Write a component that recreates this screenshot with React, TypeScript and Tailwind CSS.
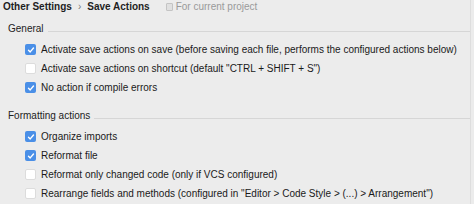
import React from "react";

type Item = { label: string; checked: boolean };

const general: Item[] = [
  { label: "Activate save actions on save (before saving each file, performs the configured actions below)", checked: true },
  { label: 'Activate save actions on shortcut (default "CTRL + SHIFT + S")', checked: false },
  { label: "No action if compile errors", checked: true },
];

const formatting: Item[] = [
  { label: "Organize imports", checked: true },
  { label: "Reformat file", checked: true },
  { label: "Reformat only changed code (only if VCS configured)", checked: false },
  { label: 'Rearrange fields and methods (configured in "Editor > Code Style > (...) > Arrangement")', checked: false },
];

function Checkbox({ checked }: { checked: boolean }) {
  if (checked) {
    return (
      <span className="flex h-[11px] w-[11px] shrink-0 items-center justify-center rounded-[2px] bg-[#4a8fe7]">
        <svg width="8" height="8" viewBox="0 0 8 8">
          <path d="M1.5 4.2 L3.2 5.9 L6.5 2" fill="none" stroke="white" strokeWidth="1.4" strokeLinecap="round" strokeLinejoin="round" />
        </svg>
      </span>
    );
  }
  return <span className="h-[11px] w-[11px] shrink-0 rounded-[2px] border border-[#dcdcdc] bg-white" />;
}

function Section({ title, items }: { title: string; items: Item[] }) {
  return (
    <div>
      <div className="flex h-[14px] items-center gap-1 pl-2">
        <span className="text-[#222]">{title}</span>
        <span className="mt-[4px] h-px flex-1 bg-[#d6d6d6]" />
      </div>
      <div className="mt-[6px] flex flex-col gap-[4px] pl-[25px]">
        {items.map((item) => (
          <div key={item.label} className="flex h-[15px] items-center gap-[5px]">
            <Checkbox checked={item.checked} />
            <span className="whitespace-nowrap text-[#1a1a1a]">{item.label}</span>
          </div>
        ))}
      </div>
    </div>
  );
}

export default function App() {
  return (
    <div
      className="h-[204px] w-[474px] overflow-hidden bg-[#ececec] text-[10px] leading-[14px]"
      style={{ fontFamily: '"Liberation Sans", Arial, sans-serif' }}
    >
      <div className="mr-[3px] h-full border-r border-[#dedede]">
        <div className="flex h-[14px] items-center pl-[3px]">
          <span className="font-bold text-[#1e1e1e]">Other Settings</span>
          <span className="mx-[6px] text-[#777]">›</span>
          <span className="font-bold text-[#1e1e1e]">Save Actions</span>
          <span className="ml-[16px] mr-[3px] inline-block h-[8px] w-[7px] rounded-[1px] border border-[#c4c4c4] bg-[#e0e0e0]" />
          <span className="text-[#9a9a9a]">For current project</span>
        </div>
        <div className="mt-[8px]">
          <Section title="General" items={general} />
        </div>
        <div className="mt-[14px]">
          <Section title="Formatting actions" items={formatting} />
        </div>
      </div>
    </div>
  );
}
